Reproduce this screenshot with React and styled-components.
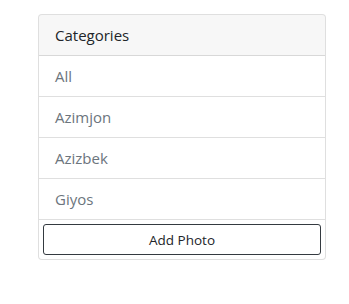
import React from "react";
import styled, { createGlobalStyle } from "styled-components";

const Global = createGlobalStyle`
  * { box-sizing: border-box; }
  body {
    margin: 0;
    background: #fff;
    font-family: "Open Sans", "Noto Sans", sans-serif;
    color: #212529;
  }
`;

const Page = styled.div`
  padding: 14px 23px 0 38px;
`;

const Card = styled.div`
  width: 288px;
  border: 1px solid rgba(0, 0, 0, 0.125);
  border-radius: 4px;
  background: #fff;
  display: flex;
  flex-direction: column;
  overflow: hidden;
`;

const Header = styled.div`
  padding: 8px 16px;
  font-size: 15px;
  line-height: 24px;
  background: rgba(0, 0, 0, 0.03);
  border-bottom: 1px solid rgba(0, 0, 0, 0.125);
  color: #212529;
`;

const List = styled.ul`
  list-style: none;
  margin: 0;
  padding: 0;
`;

const Item = styled.li`
  padding: 8px 16px;
  font-size: 15px;
  line-height: 24px;
  color: #6c757d;
  border-bottom: 1px solid rgba(0, 0, 0, 0.125);
`;

const Footer = styled.div`
  padding: 4px;
`;

const Button = styled.button`
  width: 100%;
  height: 31px;
  font-family: inherit;
  font-size: 13.5px;
  color: #212529;
  background: #fff;
  border: 1px solid #343a40;
  border-radius: 3px;
  padding: 0 8px;
  cursor: pointer;
`;

const categories = ["All", "Azimjon", "Azizbek", "Giyos"];

export default function App() {
  return (
    <Page>
      <Global />
      <Card>
        <Header>Categories</Header>
        <List>
          {categories.map((c) => (
            <Item key={c}>{c}</Item>
          ))}
        </List>
        <Footer>
          <Button>Add Photo</Button>
        </Footer>
      </Card>
    </Page>
  );
}
